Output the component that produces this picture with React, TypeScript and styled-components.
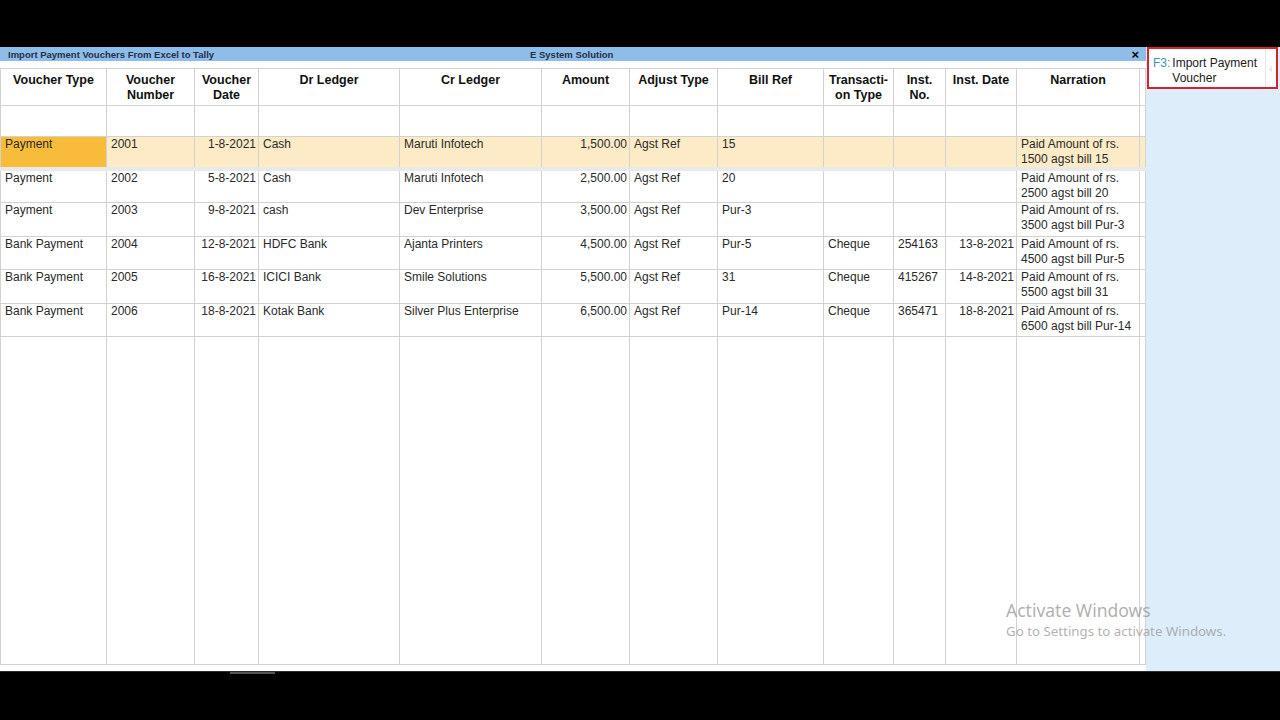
import styled, { createGlobalStyle } from 'styled-components'

const GlobalStyle = createGlobalStyle`
  html, body {
    margin: 0;
    padding: 0;
    background: #000;
  }
  body {
    font-family: "Liberation Sans", Arial, sans-serif;
  }
`

type Column = { title: string; width: number; align?: 'left' | 'right' }

const columns: Column[] = [
  { title: 'Voucher Type', width: 106 },
  { title: 'Voucher Number', width: 88 },
  { title: 'Voucher Date', width: 64, align: 'right' },
  { title: 'Dr Ledger', width: 141 },
  { title: 'Cr Ledger', width: 142 },
  { title: 'Amount', width: 88, align: 'right' },
  { title: 'Adjust Type', width: 88 },
  { title: 'Bill Ref', width: 106 },
  { title: 'Transacti- on Type', width: 70 },
  { title: 'Inst. No.', width: 52 },
  { title: 'Inst. Date', width: 71, align: 'right' },
  { title: 'Narration', width: 123 },
  { title: '', width: 6 },
]

const vouchers = [
  ['Payment', '2001', '1-8-2021', 'Cash', 'Maruti Infotech', '1,500.00', 'Agst Ref', '15', '', '', '', 'Paid Amount of rs. 1500 agst bill 15'],
  ['Payment', '2002', '5-8-2021', 'Cash', 'Maruti Infotech', '2,500.00', 'Agst Ref', '20', '', '', '', 'Paid Amount of rs. 2500 agst bill 20'],
  ['Payment', '2003', '9-8-2021', 'cash', 'Dev Enterprise', '3,500.00', 'Agst Ref', 'Pur-3', '', '', '', 'Paid Amount of rs. 3500 agst bill Pur-3'],
  ['Bank Payment', '2004', '12-8-2021', 'HDFC Bank', 'Ajanta Printers', '4,500.00', 'Agst Ref', 'Pur-5', 'Cheque', '254163', '13-8-2021', 'Paid Amount of rs. 4500 agst bill Pur-5'],
  ['Bank Payment', '2005', '16-8-2021', 'ICICI Bank', 'Smile Solutions', '5,500.00', 'Agst Ref', '31', 'Cheque', '415267', '14-8-2021', 'Paid Amount of rs. 5500 agst bill 31'],
  ['Bank Payment', '2006', '18-8-2021', 'Kotak Bank', 'Silver Plus Enterprise', '6,500.00', 'Agst Ref', 'Pur-14', 'Cheque', '365471', '18-8-2021', 'Paid Amount of rs. 6500 agst bill Pur-14'],
]

export default function App() {
  return (
    <Page>
      <GlobalStyle />
      <TopBand />
      <Workspace>
        <Window>
          <TitleBar>
            <TitleLeft>Import Payment Vouchers From Excel to Tally</TitleLeft>
            <TitleCenter>E System Solution</TitleCenter>
            <Close>×</Close>
          </TitleBar>
          <Sheet>
            <colgroup>
              {columns.map((c, i) => (
                <col key={i} style={{ width: c.width }} />
              ))}
            </colgroup>
            <thead>
              <HeadRow>
                {columns.map((c, i) => (
                  <Head key={i}>{c.title}</Head>
                ))}
              </HeadRow>
            </thead>
            <tbody>
              <BlankRow>
                {columns.map((_, i) => (
                  <Cell key={i} />
                ))}
              </BlankRow>
              {vouchers.map((v, r) => (
                <Row key={r} $selected={r === 0}>
                  {columns.map((c, i) => (
                    <Cell key={i} $align={c.align} $current={r === 0 && i === 0}>
                      {v[i] ?? ''}
                    </Cell>
                  ))}
                </Row>
              ))}
              <FillerRow>
                {columns.map((_, i) => (
                  <Cell key={i} />
                ))}
              </FillerRow>
            </tbody>
          </Sheet>
        </Window>
        <SidePanel>
          <ActionButton>
            <Key>F3:</Key>
            <ActionText>
              Import Payment
              <br />
              Voucher
            </ActionText>
            <Chevron>‹</Chevron>
          </ActionButton>
        </SidePanel>
      </Workspace>
      <BottomBand>
        <ScrollThumb />
      </BottomBand>
      <Watermark>
        <WatermarkTitle>Activate Windows</WatermarkTitle>
        <WatermarkText>Go to Settings to activate Windows.</WatermarkText>
      </Watermark>
    </Page>
  )
}

const Page = styled.div`
  position: relative;
  width: 1280px;
  height: 720px;
  display: flex;
  flex-direction: column;
  background: #000;
  overflow: hidden;
`

const TopBand = styled.div`
  height: 47px;
  flex-shrink: 0;
`

const Workspace = styled.div`
  height: 624px;
  display: flex;
`

const Window = styled.div`
  width: 1146px;
  background: #fff;
  display: flex;
  flex-direction: column;
  padding-bottom: 6px;
  box-sizing: border-box;
`

const TitleBar = styled.div`
  position: relative;
  height: 14px;
  background: #8dbde8;
  display: flex;
  align-items: center;
  padding: 0 8px;
  font-size: 9.5px;
  font-weight: bold;
  color: #24304a;
  margin-bottom: 7px;
`

const TitleLeft = styled.span`
  flex: 1;
`

const TitleCenter = styled.span`
  position: absolute;
  left: 530px;
`

const Close = styled.span`
  font-size: 13px;
  color: #000;
  margin-right: -1px;
`

const Sheet = styled.table`
  table-layout: fixed;
  border-collapse: collapse;
  width: 1145px;
  flex: 1;
  font-size: 12px;
  color: #2a2a2a;
`

const HeadRow = styled.tr`
  height: 37px;
`

const Head = styled.th`
  padding: 4px 3px 0;
  vertical-align: top;
  text-align: center;
  font-size: 12.5px;
  line-height: 15px;
  font-weight: bold;
  color: #111;
  border: 1px solid #d2d2d2;
`

const BlankRow = styled.tr`
  height: 31px;
`

const Row = styled.tr<{ $selected?: boolean }>`
  height: ${p => (p.$selected ? '29px' : '33.6px')};
  background: ${p => (p.$selected ? '#fcebc6' : '#fff')};
  td {
    ${p => p.$selected && 'border-bottom: 4px solid #e9e9e9;'}
  }
`

const FillerRow = styled.tr``

const Cell = styled.td<{ $align?: 'left' | 'right'; $current?: boolean }>`
  padding: 0 2px 0 4px;
  vertical-align: top;
  line-height: 15px;
  text-align: ${p => p.$align ?? 'left'};
  border: 1px solid #d2d2d2;
  background: ${p => (p.$current ? '#f7bc39' : 'transparent')};
  white-space: normal;
  overflow: hidden;
`

const SidePanel = styled.div`
  flex: 1;
  background: #ddedfa;
  padding: 0 2px 0 1px;
`

const ActionButton = styled.div`
  height: 42px;
  box-sizing: border-box;
  border: 2px solid #d3232d;
  background: #fff;
  display: flex;
  align-items: flex-start;
  padding: 7px 0 0 4px;
  font-size: 12px;
  line-height: 15px;
  color: #1a1a1a;
`

const Key = styled.span`
  color: #3d93ad;
  margin-right: 2px;
`

const ActionText = styled.span`
  flex: 1;
`

const Chevron = styled.span`
  align-self: stretch;
  margin-top: -7px;
  width: 10px;
  border-left: 1px solid #e4e4e4;
  color: #c8c8c8;
  font-size: 10px;
  display: flex;
  align-items: center;
  justify-content: center;
`

const BottomBand = styled.div`
  flex: 1;
  border-top: 1px solid #2e2e2e;
  position: relative;
`

const ScrollThumb = styled.div`
  width: 45px;
  height: 2px;
  margin-left: 230px;
  background: #555;
`

const Watermark = styled.div`
  position: absolute;
  left: 1006px;
  top: 599px;
  font-family: "Noto Sans", "Open Sans", sans-serif;
  color: rgba(150, 150, 150, 0.75);
  pointer-events: none;
`

const WatermarkTitle = styled.div`
  font-size: 17.5px;
  line-height: 22px;
`

const WatermarkText = styled.div`
  font-size: 13.3px;
  line-height: 20px;
`
